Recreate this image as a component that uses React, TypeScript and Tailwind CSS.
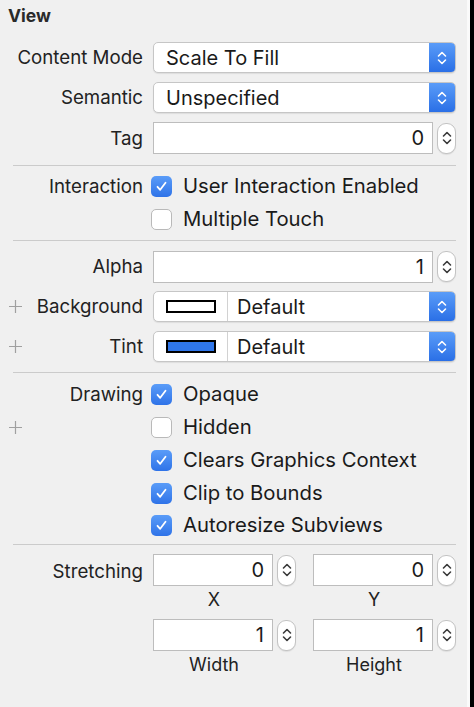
import React from 'react';

const font = { fontFamily: 'Inter, "Noto Sans", "Liberation Sans", sans-serif' };

const UpDown = ({ color }: { color: string }) => (
  <svg width="12" height="18" viewBox="0 0 12 18" fill="none">
    <path d="M2.5 7 L6 3.5 L9.5 7" stroke={color} strokeWidth="1.6" strokeLinecap="round" strokeLinejoin="round" />
    <path d="M2.5 11 L6 14.5 L9.5 11" stroke={color} strokeWidth="1.6" strokeLinecap="round" strokeLinejoin="round" />
  </svg>
);

const Label = ({ children }: { children?: React.ReactNode }) => (
  <div className="w-[143px] shrink-0 pt-[2px] text-right text-[18.7px] text-[#222]">{children}</div>
);

// thin gray plus at the left edge
const Plus = () => (
  <svg className="absolute left-[9px]" width="13" height="13" viewBox="0 0 13 13">
    <path d="M6.5 0 V13 M0 6.5 H13" stroke="#a0a0a0" strokeWidth="1.2" />
  </svg>
);

function Popup({ value, swatch }: { value: string; swatch?: string }) {
  return (
    <div className="flex-1 h-[31px] flex rounded-[5px] border border-[#c6c6c6] bg-white shadow-[0_1px_1px_rgba(0,0,0,0.08)] overflow-hidden">
      {swatch && (
        <div className="w-[74px] shrink-0 flex items-center justify-center border-r border-[#d2d2d2]">
          <div className="w-[50px] h-[13px] border-2 border-black" style={{ background: swatch }} />
        </div>
      )}
      <div className={`flex-1 flex items-center text-[20px] text-[#1a1a1a] ${swatch ? 'pl-[9px]' : 'pl-[12px]'}`}>{value}</div>
      <div className="w-[26px] shrink-0 flex items-center justify-center bg-gradient-to-b from-[#5a9cf8] to-[#2a6fe6]">
        <UpDown color="#ffffff" />
      </div>
    </div>
  );
}

function Stepper() {
  return (
    <div className="w-[19px] h-[31px] shrink-0 flex items-center justify-center rounded-[9px] border border-[#c3c3c3] bg-white shadow-[0_1px_1px_rgba(0,0,0,0.08)]">
      <UpDown color="#3a3a3a" />
    </div>
  );
}

function NumField({ value, className = 'flex-1' }: { value: string; className?: string }) {
  return (
    <div className={`flex items-center gap-[4px] ${className}`}>
      <div className="flex-1 h-[32px] flex items-center justify-end pr-[8px] bg-white border border-[#bdbdbd] text-[20px] text-[#1a1a1a]">
        {value}
      </div>
      <Stepper />
    </div>
  );
}

function Check({ on, label }: { on: boolean; label: string }) {
  return (
    <div className="flex items-center gap-[11px] h-full -ml-[2px]">
      {on ? (
        <div className="w-[21px] h-[21px] rounded-[5px] flex items-center justify-center bg-gradient-to-b from-[#5a9cf8] to-[#2f73e8]">
          <svg width="13" height="13" viewBox="0 0 13 13" fill="none">
            <path d="M2.5 6.8 L5.2 9.8 L10.5 2.8" stroke="#fff" strokeWidth="1.8" strokeLinecap="round" strokeLinejoin="round" />
          </svg>
        </div>
      ) : (
        <div className="w-[21px] h-[21px] rounded-[5px] bg-white border border-[#b9b9b9]" />
      )}
      <span className="text-[20.3px] text-[#1a1a1a]">{label}</span>
    </div>
  );
}

const Sep = ({ className = '' }: { className?: string }) => (
  <div className={`ml-[13px] h-px bg-[#cbcbcb] ${className}`} />
);

function Row({ label, plus, children, className = '' }: { label?: string; plus?: boolean; children?: React.ReactNode; className?: string }) {
  return (
    <div className={`relative flex items-center gap-[10px] ${className}`}>
      {plus && <Plus />}
      <Label>{label}</Label>
      <div className="flex-1 flex items-center gap-[4px] h-full">{children}</div>
    </div>
  );
}

const Caption = ({ children }: { children: React.ReactNode }) => (
  <div className="w-[122px] text-center text-[18px] leading-[22px] pt-[3px] text-[#222]">{children}</div>
);

export default function App() {
  return (
    <div className="w-[474px] h-[707px] flex bg-black" style={font}>
      <div className="w-[470px] h-full bg-[#f0f0f0] border-r-[3px] border-[#fafafa] pr-[11px]">
        <div className="h-[42px] pl-[8px] pt-[3px] text-[17.5px] font-bold text-[#2a2a2a]">View</div>

        <Row label="Content Mode" className="h-[31px]">
          <Popup value="Scale To Fill" />
        </Row>
        <Row label="Semantic" className="h-[31px] mt-[9px]">
          <Popup value="Unspecified" />
        </Row>
        <Row label="Tag" className="h-[32px] mt-[9px]">
          <NumField value="0" />
        </Row>

        <Sep className="mt-[11px]" />

        <div className="pt-[4px]">
          <Row label="Interaction" className="h-[33px]">
            <Check on label="User Interaction Enabled" />
          </Row>
          <Row className="h-[32px]">
            <Check on={false} label="Multiple Touch" />
          </Row>
        </div>

        <Sep className="mt-[5px]" />

        <Row label="Alpha" className="h-[31px] mt-[10px]">
          <NumField value="1" />
        </Row>
        <Row label="Background" plus className="h-[31px] mt-[9px]">
          <Popup value="Default" swatch="#ffffff" />
        </Row>
        <Row label="Tint" plus className="h-[31px] mt-[9px]">
          <Popup value="Default" swatch="#2f76ea" />
        </Row>

        <Sep className="mt-[10px]" />

        <div className="pt-[5px]">
          <Row label="Drawing" className="h-[33px]">
            <Check on label="Opaque" />
          </Row>
          <Row plus className="h-[33px]">
            <Check on={false} label="Hidden" />
          </Row>
          <Row className="h-[33px]">
            <Check on label="Clears Graphics Context" />
          </Row>
          <Row className="h-[32px]">
            <Check on label="Clip to Bounds" />
          </Row>
          <Row className="h-[33px]">
            <Check on label="Autoresize Subviews" />
          </Row>
        </div>

        <Sep className="mt-[2px]" />

        <div className="mt-[9px] flex gap-[10px]">
          <Label>
            <div className="h-[32px] flex items-center justify-end">Stretching</div>
          </Label>
          <div className="flex-1 grid grid-cols-2 gap-x-[17px]">
            <div className="flex flex-col">
              <NumField value="0" />
              <Caption>X</Caption>
            </div>
            <div className="flex flex-col">
              <NumField value="0" />
              <Caption>Y</Caption>
            </div>
            <div className="flex flex-col mt-[8px]">
              <NumField value="1" />
              <Caption>Width</Caption>
            </div>
            <div className="flex flex-col mt-[8px]">
              <NumField value="1" />
              <Caption>Height</Caption>
            </div>
          </div>
        </div>
      </div>
    </div>
  );
}
